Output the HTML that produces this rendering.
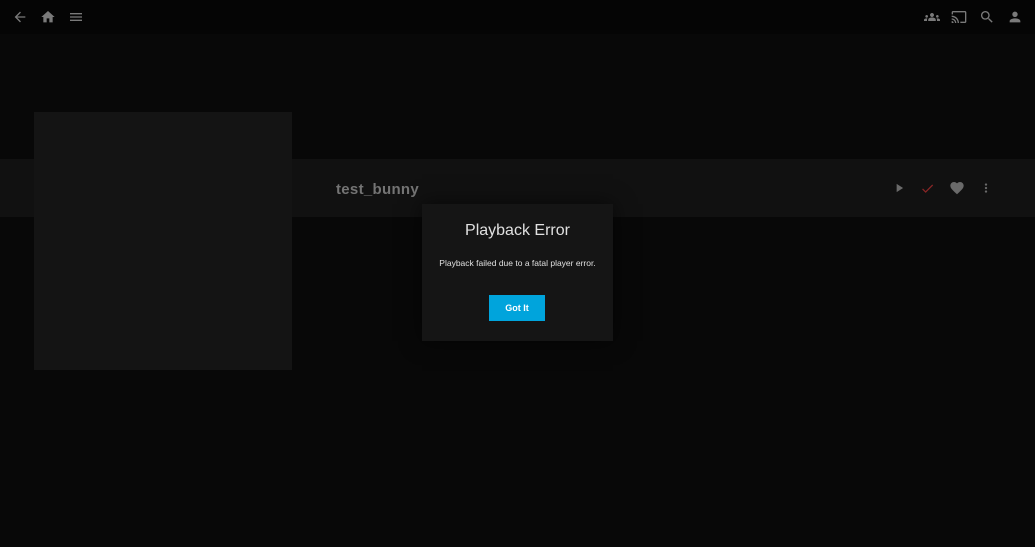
<!DOCTYPE html>
<html><head><style>
html,body{margin:0;width:1035px;height:547px;background:#080808;overflow:hidden;font-family:"Liberation Sans","DejaVu Sans",sans-serif;}
.hdr{position:absolute;left:0;top:0;width:1035px;height:34px;background:#050505;}
.ic{position:absolute;fill:#7a7a7a;}
.band{position:absolute;left:0;top:159px;width:1035px;height:58px;background:#111;}
.poster{position:absolute;left:34px;top:112px;width:258px;height:258px;background:#141414;}
.title{position:absolute;left:336px;top:181px;font-size:15px;font-weight:bold;color:#747474;letter-spacing:0.3px;}
.dlg{position:absolute;left:422px;top:204px;width:191px;height:137px;background:#151515;box-shadow:0 0 20px rgba(0,0,0,.6);color:#e0e0e0;text-align:center;}
.dlg h1{margin:0;position:absolute;top:18px;width:100%;font-size:16px;font-weight:normal;}
.dlg p{margin:0;position:absolute;top:54px;width:100%;font-size:8.5px;}
.btn{position:absolute;left:67px;top:91px;width:56px;height:26px;background:#00a4dc;color:#fff;font-size:9px;font-weight:bold;line-height:26px;}
</style></head><body>
<div class="hdr"></div>
<svg class="ic" style="left:12px;top:9px" width="16" height="16" viewBox="0 0 24 24"><path d="M20 11H7.8l5.6-5.6L12 4l-8 8 8 8 1.4-1.4L7.8 13H20z"/></svg>
<svg class="ic" style="left:40px;top:9px" width="16" height="16" viewBox="0 0 24 24"><path d="M10 20v-6h4v6h5v-8h3L12 3 2 12h3v8z"/></svg>
<svg class="ic" style="left:68px;top:9px" width="16" height="16" viewBox="0 0 24 24"><path d="M3 18h18v-2H3zm0-5h18v-2H3zm0-7v2h18V6z"/></svg>
<svg class="ic" style="left:924px;top:9px" width="16" height="16" viewBox="0 0 24 24"><path d="M12 12.75c1.6 0 3 .4 4.1.9 1 .5 1.6 1.5 1.6 2.6V18H6.3v-1.7c0-1.1.6-2.1 1.6-2.6 1.1-.5 2.5-.9 4.1-.9zM4 13c1.1 0 2-.9 2-2s-.9-2-2-2-2 .9-2 2 .9 2 2 2zm1.1 1.1c-.4-.1-.7-.1-1.1-.1-1 0-1.9.2-2.8.6C.5 14.9 0 15.600 0 16.4V18h4.5v-1.6c0-.8.2-1.6.6-2.3zM20 13c1.1 0 2-.9 2-2s-.9-2-2-2-2 .9-2 2 .9 2 2 2zm4 3.4c0-.8-.5-1.5-1.2-1.8-.9-.4-1.8-.6-2.8-.6-.4 0-.8 0-1.1.1.4.7.6 1.5.6 2.3V18H24zM12 6c1.7 0 3 1.3 3 3s-1.3 3-3 3-3-1.3-3-3 1.3-3 3-3z"/></svg>
<svg class="ic" style="left:951px;top:9px" width="16" height="16" viewBox="0 0 24 24"><path d="M21 3H3c-1.1 0-2 .9-2 2v3h2V5h18v14h-7v2h7c1.1 0 2-.9 2-2V5c0-1.1-.9-2-2-2zM1 18v3h3c0-1.7-1.3-3-3-3zm0-4v2c2.8 0 5 2.2 5 5h2c0-3.9-3.1-7-7-7zm0-4v2c5 0 9 4 9 9h2c0-6.1-4.9-11-11-11z"/></svg>
<svg class="ic" style="left:979px;top:9px" width="16" height="16" viewBox="0 0 24 24"><path d="M15.5 14h-.8l-.3-.3c1-1.1 1.6-2.6 1.6-4.2C16 5.9 13.1 3 9.5 3S3 5.9 3 9.5 5.9 16 9.5 16c1.6 0 3.1-.6 4.2-1.6l.3.3v.8l5 5 1.5-1.5-5-5zm-6 0C7 14 5 12 5 9.5S7 5 9.5 5 14 7 14 9.5 12 14 9.5 14z"/></svg>
<svg class="ic" style="left:1007px;top:9px" width="16" height="16" viewBox="0 0 24 24"><path d="M12 12c2.2 0 4-1.8 4-4s-1.8-4-4-4-4 1.8-4 4 1.8 4 4 4zm0 2c-2.7 0-8 1.3-8 4v2h16v-2c0-2.7-5.3-4-8-4z"/></svg>
<div class="band"></div>
<div class="poster"></div>
<div class="title">test_bunny</div>
<svg class="ic" style="left:892px;top:181px;fill:#6a6a6a" width="14" height="14" viewBox="0 0 24 24"><path d="M8 5v14l11-7z"/></svg>
<svg class="ic" style="left:920px;top:181px;fill:#8b2626" width="15" height="15" viewBox="0 0 24 24"><path d="M9 16.2 4.8 12l-1.4 1.4L9 19 21 7l-1.4-1.4z"/></svg>
<svg class="ic" style="left:949px;top:180px;fill:#6a6a6a" width="16" height="16" viewBox="0 0 24 24"><path d="m12 21.35-1.45-1.32C5.4 15.36 2 12.28 2 8.5 2 5.42 4.42 3 7.5 3c1.74 0 3.41.81 4.5 2.09C13.09 3.810 14.76 3 16.5 3 19.58 3 22 5.42 22 8.5c0 3.78-3.4 6.86-8.55 11.54z"/></svg>
<svg class="ic" style="left:979px;top:181px;fill:#6a6a6a" width="14" height="14" viewBox="0 0 24 24"><path d="M12 8c1.1 0 2-.9 2-2s-.9-2-2-2-2 .9-2 2 .9 2 2 2zm0 2c-1.1 0-2 .9-2 2s.9 2 2 2 2-.9 2-2-.9-2-2-2zm0 6c-1.1 0-2 .9-2 2s.9 2 2 2 2-.9 2-2-.9-2-2-2z"/></svg>
<div class="dlg">
<h1>Playback Error</h1>
<p>Playback failed due to a fatal player error.</p>
<div class="btn">Got It</div>
</div>
</body></html>
